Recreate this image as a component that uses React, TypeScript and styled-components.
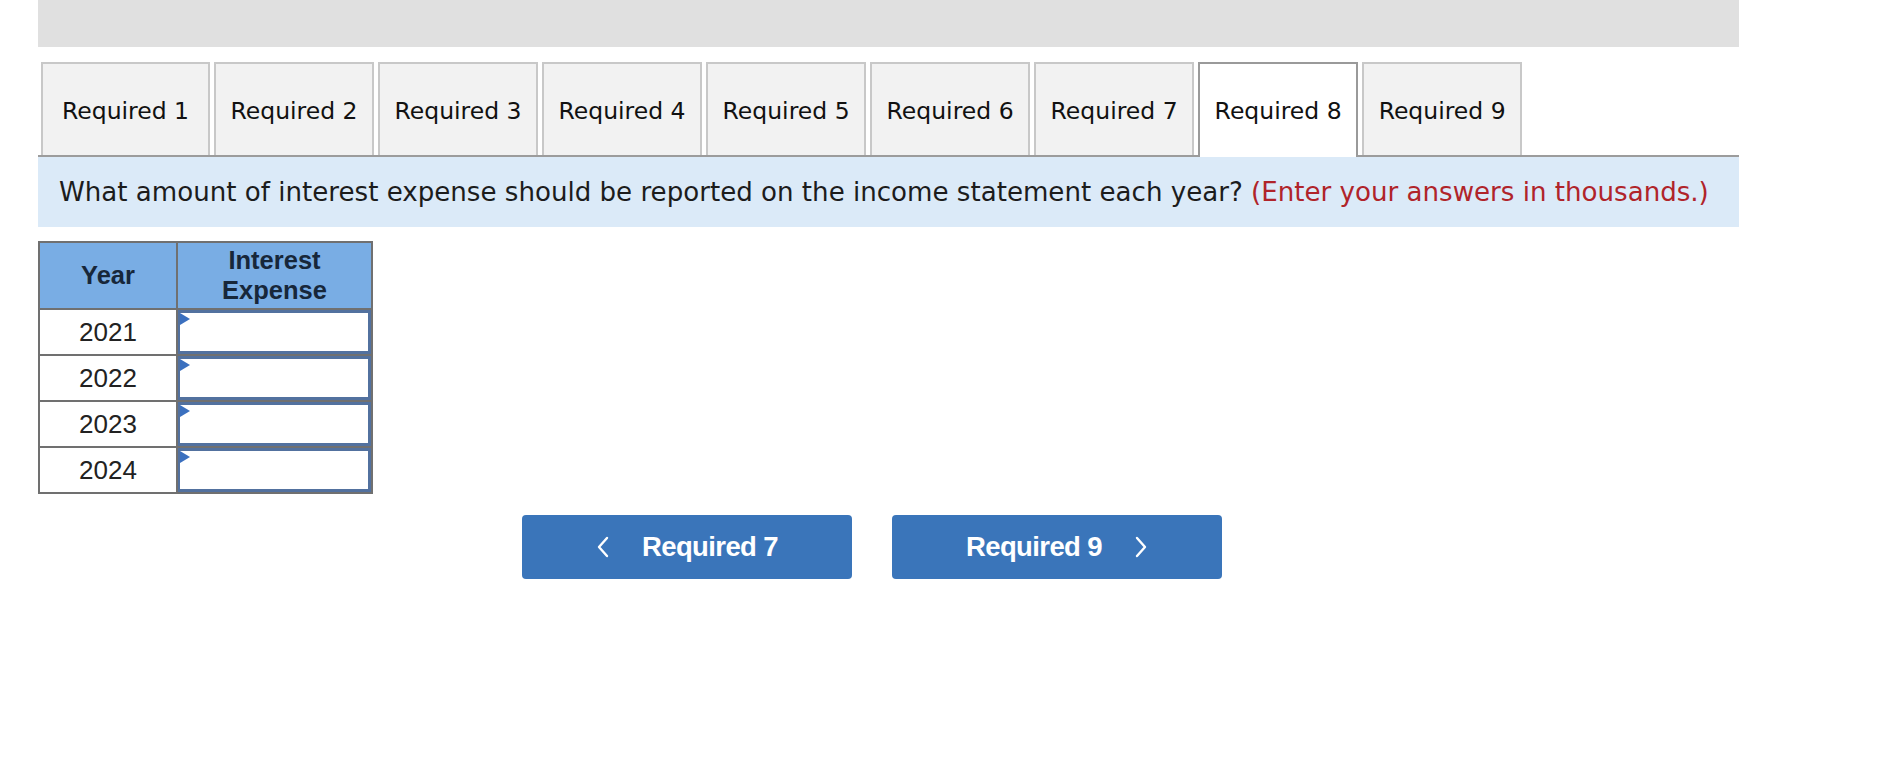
import styled, { createGlobalStyle } from "styled-components";

const tabs = [1, 2, 3, 4, 5, 6, 7, 8, 9];
const years = ["2021", "2022", "2023", "2024"];

export default function App() {
  return (
    <>
      <GlobalStyle />
      <Page>
        <TopBar />
        <TabList>
          {tabs.map((n) => (
            <Tab key={n} $active={n === 8} $first={n === 1}>
              Required {n}
            </Tab>
          ))}
        </TabList>
        <Prompt>
          What amount of interest expense should be reported on the income
          statement each year?&nbsp;<Hint>(Enter your answers in thousands.)</Hint>
        </Prompt>
        <AnswerTable>
          <thead>
            <tr>
              <HeadCell $width={138}>Year</HeadCell>
              <HeadCell $width={195}>
                Interest
                <br />
                Expense
              </HeadCell>
            </tr>
          </thead>
          <tbody>
            {years.map((y) => (
              <tr key={y}>
                <YearCell>{y}</YearCell>
                <InputCell>
                  <AnswerBox>
                    <Marker />
                  </AnswerBox>
                </InputCell>
              </tr>
            ))}
          </tbody>
        </AnswerTable>
        <NavRow>
          <NavButton>
            <Chevron viewBox="0 0 14 22">
              <polyline points="11,2 3,11 11,20" />
            </Chevron>
            Required 7
          </NavButton>
          <NavButton>
            Required 9
            <Chevron viewBox="0 0 14 22">
              <polyline points="3,2 11,11 3,20" />
            </Chevron>
          </NavButton>
        </NavRow>
      </Page>
    </>
  );
}

const GlobalStyle = createGlobalStyle`
  body {
    margin: 0;
    background: #fff;
    font-family: "DejaVu Sans", Verdana, sans-serif;
    color: #1c1c1c;
  }
`;

const Page = styled.div`
  width: 1701px;
  margin-left: 38px;
`;

const TopBar = styled.div`
  height: 47px;
  background-color: #e0e0e0;
`;

const TabList = styled.div`
  display: flex;
  align-items: flex-end;
  gap: 4px;
  margin-top: 15px;
  padding-left: 3px;
  height: 93px;
  border-bottom: 2px solid #9c9c9c;
`;

const Tab = styled.div<{ $active?: boolean; $first?: boolean }>`
  box-sizing: border-box;
  display: flex;
  align-items: center;
  height: ${({ $active }) => ($active ? "95px" : "93px")};
  margin-bottom: ${({ $active }) => ($active ? "-2px" : "0")};
  padding: ${({ $first }) => ($first ? "0 19px" : "0 14.5px")};
  padding-top: 2px;
  padding-bottom: ${({ $active }) => ($active ? "2px" : "0")};
  border: 2px solid ${({ $active }) => ($active ? "#9a9a9a" : "#c8c8c8")};
  border-bottom: none;
  background-color: ${({ $active }) => ($active ? "#fff" : "#f2f2f2")};
  font-size: 23.5px;
  white-space: nowrap;
  color: #111;
`;

const Prompt = styled.div`
  display: flex;
  align-items: center;
  height: 70px;
  padding-left: 21px;
  background-color: #dbeaf8;
  font-size: 26.1px;
  color: #1c1c1c;
  white-space: nowrap;
`;

const Hint = styled.span`
  color: #b0242a;
`;

const AnswerTable = styled.table`
  margin-top: 14px;
  border-collapse: collapse;
  border: 2px solid #707070;
  font-family: "Liberation Sans", Arial, sans-serif;
`;

const HeadCell = styled.th<{ $width: number }>`
  box-sizing: border-box;
  width: ${({ $width }) => $width}px;
  height: 67px;
  padding: 0 0 2px;
  border: 2px solid #707070;
  background-color: #79ade4;
  color: #17273a;
  font-size: 25.5px;
  line-height: 30px;
  font-weight: bold;
  text-align: center;
`;

const YearCell = styled.td`
  height: 44px;
  padding: 0;
  border: 2px solid #707070;
  font-size: 26px;
  color: #222;
  text-align: center;
`;

const InputCell = styled.td`
  height: 44px;
  padding: 0;
  border: 2px solid #707070;
`;

const AnswerBox = styled.div`
  position: relative;
  box-sizing: border-box;
  height: 44px;
  border: 3px solid #52719f;
  border-left-width: 2px;
  background: #fff;
`;

const Marker = styled.span`
  position: absolute;
  left: 0;
  top: 0;
  width: 0;
  height: 0;
  border-top: 6px solid transparent;
  border-bottom: 6px solid transparent;
  border-left: 10px solid #3b70bf;
`;

const NavRow = styled.div`
  display: flex;
  gap: 40px;
  margin-top: 21px;
  padding-left: 484px;
`;

const NavButton = styled.button`
  display: flex;
  align-items: center;
  justify-content: center;
  gap: 32px;
  width: 330px;
  height: 64px;
  border: none;
  border-radius: 4px;
  background-color: #3a75ba;
  color: #fff;
  font-family: "Liberation Sans", Arial, sans-serif;
  font-size: 27.5px;
  font-weight: bold;
  letter-spacing: -0.6px;
  cursor: pointer;
`;

const Chevron = styled.svg`
  width: 14px;
  height: 22px;
  fill: none;
  stroke: #fff;
  stroke-width: 2.4;
  stroke-linecap: round;
  stroke-linejoin: round;
`;
